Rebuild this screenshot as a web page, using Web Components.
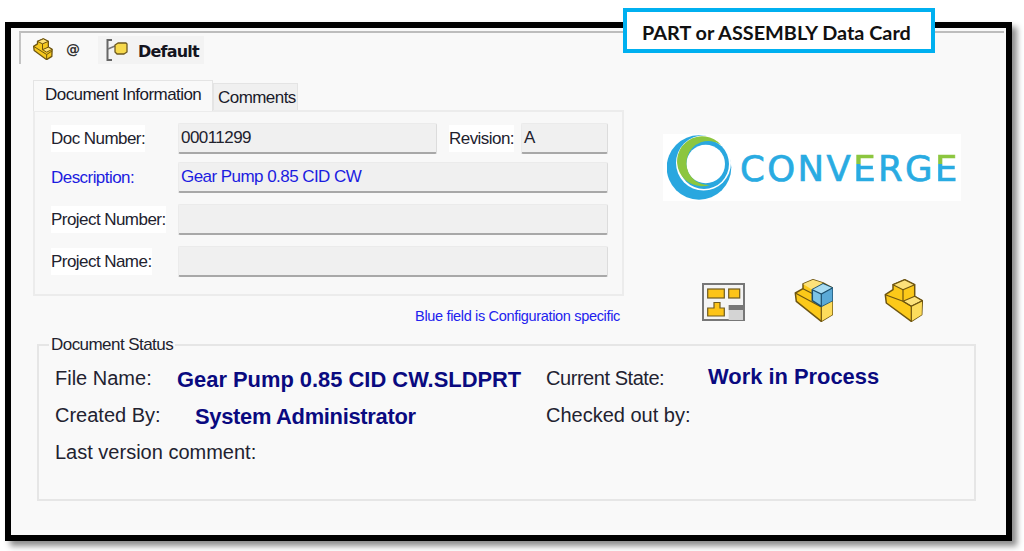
<!DOCTYPE html>
<html>
<head>
<meta charset="utf-8">
<title>Data Card</title>
<style>
  html, body { margin: 0; padding: 0; background: #fff; }
  body { width: 1024px; height: 551px; overflow: hidden; font-family: "Liberation Sans", Arial, sans-serif; }
</style>
</head>
<body>
<data-card>
  <call-out slot="callout">PART or ASSEMBLY Data Card</call-out>
  <card-tab slot="tabs" active>
    <svg width="22" height="22" viewBox="0 0 42 44">
      <path d="M2.3 16.7 L10 11.7 V6.7 L21.7 1.7 L31.7 6.7 V18.3 L39.3 22.7 L38.7 36.7 L28.3 43.3 L3.3 25 Z" fill="#f5c81e" stroke="#6e5510" stroke-width="2.6" stroke-linejoin="round"/>
      <path d="M10 6.7 L21.7 1.7 L31.7 6.7 L20 11.7 Z M20 23.3 L31.7 18.3 L39.3 22.7 L28.3 28.3 Z" fill="#fde27a" stroke="#6e5510" stroke-width="2" stroke-linejoin="round"/>
      <path d="M20 11.7 V23.3 M2.3 16.7 L28.3 33 V43.3 M28.3 33 L39 26" fill="none" stroke="#6e5510" stroke-width="2"/>
    </svg>
    <b class="at">@</b>
  </card-tab>
  <card-tab slot="tabs">
    <svg width="26" height="24" viewBox="0 0 26 24">
      <path d="M7 2 H2.5 V22 H7" fill="none" stroke="#666" stroke-width="2"/>
      <path d="M3 11 L10 8" fill="none" stroke="#777" stroke-width="1.4"/>
      <path d="M10 7 L13 5 H21 L22 6 V14 L19 16 H12 L10 14 Z" fill="#f7d94c" stroke="#6e5a20" stroke-width="1.3" stroke-linejoin="round"/>
    </svg>
    <b>Default</b>
  </card-tab>

  <div slot="left">
    <info-tabs>
      <info-tab active>Document Information</info-tab>
      <info-tab>Comments</info-tab>
    </info-tabs>
    <info-panel>
      <field-row label="Doc Number:" value="00011299" top="11" rev="A"></field-row>
      <field-row label="Description:" value="Gear Pump 0.85 CID CW" top="8" blue></field-row>
      <field-row label="Project Number:" top="11"></field-row>
      <field-row label="Project Name:" top="11"></field-row>
    </info-panel>
    <div class="note" style="color:#2222ee;font-size:14.5px;letter-spacing:-.33px;text-align:right;width:587px;margin-top:12px;line-height:16px;white-space:nowrap;">Blue field is Configuration specific</div>
  </div>

  <div slot="right">
    <converge-logo></converge-logo>
    <icon-row></icon-row>
  </div>

  <status-box slot="status">
    <status-item label="File Name:" value="Gear Pump 0.85 CID CW.SLDPRT" vx="122"></status-item>
    <status-item label="Current State:" value="Work in Process" vx="162" up tight></status-item>
    <status-item label="Created By:" value="System Administrator" vx="140" vtight></status-item>
    <status-item label="Checked out by:"></status-item>
    <status-item label="Last version comment:"></status-item>
  </status-box>
</data-card>

<script>
const define = (name, style, html, setup) => {
  customElements.define(name, class extends HTMLElement {
    constructor() {
      super()
      const root = this.attachShadow({ mode: 'open' })
      root.innerHTML = `<style>${style}</style>${html}`
    }
    connectedCallback() {
      if (setup) setup(this, this.shadowRoot)
    }
  })
}

define('data-card', `
  :host {
    display: block; position: relative; box-sizing: border-box;
    width: 1007px; height: 519px; margin: 22px 0 0 5px;
    border: 6px solid #000; background: #f9f9f9;
    box-shadow: 5px 5px 6px rgba(0,0,0,.45);
    padding: 3px 2px 0 8px;
  }
  #top { display: flex; align-items: flex-end; box-sizing: border-box; height: 33px; border-top: 2px solid #bdbdbd; border-left: 2px solid #c4c4c4; }
  #main { display: flex; padding: 16px 0 0 14px; }
  #left { width: 630px; flex: none; }
  #right { flex: 1; }
  #status { display: block; padding: 20px 0 0 18px; }
`, `
  <slot name="callout"></slot>
  <div id="top"><slot name="tabs"></slot></div>
  <div id="main">
    <div id="left"><slot name="left"></slot></div>
    <div id="right"><slot name="right"></slot></div>
  </div>
  <div id="status"><slot name="status"></slot></div>
`)

define('call-out', `
  :host {
    position: absolute; left: 612px; top: -20px; width: 312px; height: 45px;
    box-sizing: border-box; border: 4px solid #00b0f0; background: #fff;
    font: bold 19.85px/41px "Lato", "Liberation Sans", sans-serif; color: #111;
    padding-left: 15px; white-space: nowrap;
  }
`, `<slot></slot>`)

define('card-tab', `
  :host {
    display: flex; align-items: center; gap: 7px; box-sizing: border-box;
    height: 28px; width: 106px; padding: 0 0 0 7px;
    background: #f3f3f3; font: bold 16px "DejaVu Sans", sans-serif; letter-spacing: -.8px; color: #14141e;
  }
  :host([active]) {
    height: 31px; width: 77px; padding: 0 0 0 11px; gap: 12px;
    background: #f9f9f9;
  }
  ::slotted(b) { font-weight: bold; margin-top: 3px; }
  ::slotted(.at) { font-size: 14px; margin-top: 0; color: #333; }
`, `<slot></slot>`)

define('info-tabs', `:host { display: flex; align-items: flex-end; height: 30px; }`, `<slot></slot>`)

define('info-tab', `
  :host {
    display: block; box-sizing: border-box; height: 27px; width: 85px; padding: 0 4px;
    background: #f0f0f0; border: 1px solid #e4e4e4; border-bottom: 0;
    font: 17px/28px "Liberation Sans", sans-serif; letter-spacing: -.55px; color: #1a1a2a; white-space: nowrap;
  }
  :host([active]) {
    width: 180px; height: 31px; padding: 0 11px; background: #f9f9f9;
    margin-bottom: -1px; line-height: 27px; position: relative; z-index: 1;
  }
`, `<slot></slot>`)

define('info-panel', `
  :host {
    display: block; box-sizing: border-box; width: 591px; height: 186px;
    border: 2px solid #ececec; background: #f8f8f8; padding: 0 14px 0 16px;
  }
`, `<slot></slot>`)

define('field-row', `
  :host { display: flex; align-items: center; height: 31px; font: 17px "Liberation Sans", sans-serif; letter-spacing: -.55px; color: #22222e; }
  :host([blue]) { color: #1c1ce0; }
  #label { width: 127px; flex: none; white-space: nowrap; }
  #label span { display: inline-block; background: #fff; line-height: 27px; }
  :host([blue]) #label span { background: transparent; }
  .box {
    flex: 1; box-sizing: border-box; height: 31px; padding: 0 2px; line-height: 27px;
    background: #f0f0f0; border: 1px solid #ebebeb; border-radius: 2px;
    border-bottom: 2px solid #a8a8a8; border-right-color: #dcdcdc; white-space: nowrap;
  }
  #rev { display: none; align-items: center; flex: none; margin-left: 12px; }
  #rev span { background: #fff; line-height: 27px; }
  #rev .box { width: 87px; flex: none; margin-left: 7px; }
`, `
  <div id="label"><span></span></div>
  <div class="box" id="value"></div>
  <div id="rev"><span>Revision:</span><div class="box" id="revv"></div></div>
`, (el, root) => {
  root.querySelector('#label span').textContent = el.getAttribute('label')
  root.getElementById('value').textContent = el.getAttribute('value') || ''
  el.style.marginTop = `${el.getAttribute('top')}px`
  if (el.hasAttribute('rev')) {
    root.getElementById('rev').style.display = 'flex'
    root.getElementById('revv').textContent = el.getAttribute('rev')
  }
})

define('converge-logo', `
  :host {
    display: flex; align-items: center; box-sizing: border-box; width: 298px; height: 67px;
    margin: 54px 0 0 0; background: #fff; padding-left: 4px; gap: 7px;
  }
  svg { flex: none; }
  #word {
    font: 35.5px/1 "DejaVu Sans", sans-serif; color: #29abe2;
    letter-spacing: 2.4px; white-space: nowrap; padding-top: 3px;
    -webkit-text-stroke: .7px #29abe2;
  }
  .e {
    background: linear-gradient(#8cc63f 0 40%, #29abe2 40%);
    -webkit-background-clip: text; background-clip: text; color: transparent;
    -webkit-text-stroke: .7px transparent;
  }
`, `
  <svg width="66" height="66" viewBox="0 0 66 66">
    <circle cx="32" cy="32.5" r="32.3" fill="#29a7df"/>
    <circle cx="36.5" cy="28" r="27.5" fill="#fff"/>
    <circle cx="37" cy="29" r="25" fill="#29a7df"/>
    <circle cx="38.7" cy="29" r="19.3" fill="#fff"/>
    <path d="M54 10 A25 25 0 1 0 43 50 A22 22 0 1 1 54 10 Z" fill="#8cc63f"/>
  </svg>
  <div id="word">CONV<span class="e">E</span>RG<span class="e">E</span></div>
`)

define('icon-row', `
  :host { display: flex; align-items: flex-start; margin: 77px 0 0 39px; height: 44px; }
  svg { flex: none; }
  #sheet { margin: 5px 48px 0 0; }
  #third { margin-left: 50px; }
`, `
  <svg id="sheet" width="43" height="38" viewBox="0 0 43 38">
    <rect x="1" y="1" width="41" height="36" fill="#f4f4f4" stroke="#777" stroke-width="2"/>
    <rect x="5.7" y="6" width="16.6" height="9" fill="#fcc419" stroke="#6e5a20" stroke-width="1.2"/>
    <rect x="26.7" y="6" width="11" height="9" fill="#fcc419" stroke="#6e5a20" stroke-width="1.2"/>
    <path d="M5.7 33 V25 H12 V19.5 H18 V25 H22.3 V33 Z" fill="#fcc419" stroke="#6e5a20" stroke-width="1.2"/>
    <rect x="26.7" y="22" width="14.3" height="15" fill="#d4d4d4"/>
    <rect x="26.7" y="22" width="14.3" height="5" fill="#777"/>
  </svg>
  <svg width="40" height="44" viewBox="0 0 40 44">
    <path d="M2.3 15 L10 10.7 V6 L20 1.7 L30 5 L39.3 10 V36.7 L28.3 43.3 L3.3 23.3 Z" fill="#fcc919" stroke="#6e5510" stroke-width="1.5" stroke-linejoin="round"/>
    <path d="M10 6 L20 1.7 L30 5 L19.3 11.7 Z" fill="#fde27a"/>
    <path d="M28.3 28.3 L39.3 22.7 V36.7 L28.3 43.3 Z" fill="#fddc5c"/>
    <path d="M10 10.7 L19.3 15.5 M2.3 15 L28.3 29 V43.3" fill="none" stroke="#6e5510" stroke-width="1.2"/>
    <path d="M19.3 11.7 L30 6 L39.3 10 V22.7 L28.3 28.3 L19.3 22.7 Z" fill="#7cc4e6" stroke="#1c4f6e" stroke-width="1.5" stroke-linejoin="round"/>
    <path d="M28.3 16 L39.3 10 V22.7 L28.3 28.3 Z" fill="#5aa9d6"/>
    <path d="M19.3 11.7 L28.3 16 L39.3 10 L30 6 Z" fill="#a8dcf2"/>
    <path d="M19.3 11.7 L28.3 16 L39.3 10 M28.3 16 V28.3" fill="none" stroke="#1c4f6e" stroke-width="1.2"/>
  </svg>
  <svg id="third" width="42" height="44" viewBox="0 0 42 44">
    <path d="M2.3 16.7 L10 11.7 V6.7 L21.7 1.7 L31.7 6.7 V18.3 L39.3 22.7 L38.7 36.7 L28.3 43.3 L3.3 25 Z" fill="#fcc919" stroke="#6e5510" stroke-width="1.5" stroke-linejoin="round"/>
    <path d="M10 6.7 L21.7 1.7 L31.7 6.7 L20 11.7 Z M20 23.3 L31.7 18.3 L39.3 22.7 L28.3 28.3 Z" fill="#fde27a" stroke="#6e5510" stroke-width="1.1" stroke-linejoin="round"/>
    <path d="M28.3 28.3 L39 23 L38.7 36.7 L28.3 43.3 Z" fill="#fddc5c"/>
    <path d="M20 11.7 V23.3 M2.3 16.7 L20 23.3 L28.3 28.3 V43.3 M28.3 28.3 L39 23" fill="none" stroke="#6e5510" stroke-width="1.2"/>
  </svg>
`)

define('status-box', `
  :host {
    display: block; position: relative; box-sizing: border-box; width: 939px; height: 157px;
    border: 2px solid #e6e6e6; padding: 14px 0 0 16px;
  }
  #legend {
    position: absolute; left: 10px; top: -10px; padding: 0 2px; background: #f9f9f9;
    font: 17px/18px "Liberation Sans", sans-serif; letter-spacing: -.55px; color: #22222e; white-space: nowrap;
  }
  #grid { display: grid; grid-template-columns: 491px 1fr; grid-auto-rows: 37px; }
`, `
  <div id="legend">Document Status</div>
  <div id="grid"><slot></slot></div>
`)

define('status-item', `
  :host {
    display: flex; align-items: center; position: relative;
    font: 20px "Liberation Sans", sans-serif; color: #222230; white-space: nowrap;
  }
  :host([tight]) #label { letter-spacing: -.45px; }
  #value { font: bold 21.9px "Liberation Sans", sans-serif; color: #0a0a80; }
  :host([vtight]) #value { letter-spacing: -.3px; }
`, `
  <span id="label"></span><span id="value"></span>
`, (el, root) => {
  const label = root.getElementById('label')
  const value = root.getElementById('value')
  label.textContent = el.getAttribute('label')
  value.textContent = el.getAttribute('value') || ''
  if (el.getAttribute('vx')) {
    label.style.width = `${el.getAttribute('vx')}px`
    label.style.flex = 'none'
  }
  value.style.marginTop = el.hasAttribute('up') ? '-3px' : '2px'
})
</script>
</body>
</html>
